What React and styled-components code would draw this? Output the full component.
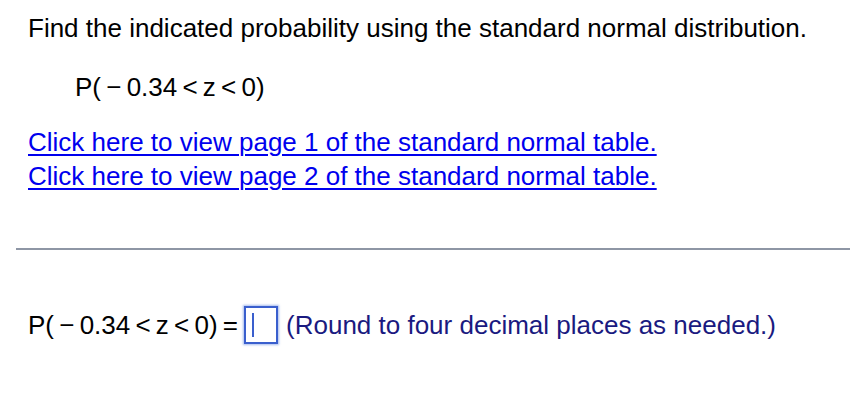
import React from "react";
import styled, { createGlobalStyle } from "styled-components";

const Global = createGlobalStyle`
  html, body { margin: 0; padding: 0; background: #fff; }
  body { font-family: Arial, "Liberation Sans", Helvetica, sans-serif; color: #000; }
`;

const Page = styled.div`
  width: 850px;
  height: 416px;
  box-sizing: border-box;
  display: flex;
  flex-direction: column;
  font-size: 26px;
  line-height: 30px;
`;

const Section = styled.div`
  padding: ${(p) => p.$pad || "0 0 0 28px"};
`;

const Prompt = styled.p`
  margin: 0;
`;

const Math = styled.span`
  white-space: pre;
  word-spacing: -2px;
`;

const Expr = styled.div`
  margin-left: ${(p) => p.$indent || 0}px;
`;

const Links = styled.div`
  display: flex;
  flex-direction: column;
  gap: 4px;
`;

const Link = styled.a`
  color: #0000ee;
  text-decoration: underline;
  text-decoration-thickness: 2px;
  text-underline-offset: 3px;
  cursor: pointer;
`;

const Rule = styled.hr`
  margin: 0 0 0 16px;
  border: none;
  height: 2px;
  background: #8e96a5;
`;

const AnswerRow = styled.div`
  display: flex;
  align-items: center;
  white-space: pre;
`;

const InputBox = styled.span`
  display: inline-flex;
  align-items: center;
  box-sizing: border-box;
  width: 34px;
  height: 38px;
  margin: 0 8px 0 6px;
  border: 2px solid #3a5fcd;
  box-shadow: 0 0 2px 1px rgba(80, 120, 220, 0.5);
  background: #fff;
  padding-left: 6px;
`;

const Caret = styled.span`
  width: 2px;
  height: 24px;
  background: #3a5fcd;
`;

const Hint = styled.span`
  color: #1a1a80;
`;

export default function App() {
  return (
    <Page>
      <Global />
      <Section $pad="13px 0 0 28px">
        <Prompt>Find the indicated probability using the standard normal distribution.</Prompt>
      </Section>
      <Section $pad="29px 0 0 28px">
        <Expr $indent={47}>
          <Math>P( − 0.34 &lt; z &lt; 0)</Math>
        </Expr>
      </Section>
      <Section $pad="25px 0 0 28px">
        <Links>
          <Link>Click here to view page 1 of the standard normal table.</Link>
          <Link>Click here to view page 2 of the standard normal table.</Link>
        </Links>
      </Section>
      <Section $pad="57px 0 0 0">
        <Rule />
      </Section>
      <Section $pad="56px 0 0 28px">
        <AnswerRow>
          <Math>P( − 0.34 &lt; z &lt; 0) =</Math>
          <InputBox>
            <Caret />
          </InputBox>
          <Hint>(Round to four decimal places as needed.)</Hint>
        </AnswerRow>
      </Section>
    </Page>
  );
}
